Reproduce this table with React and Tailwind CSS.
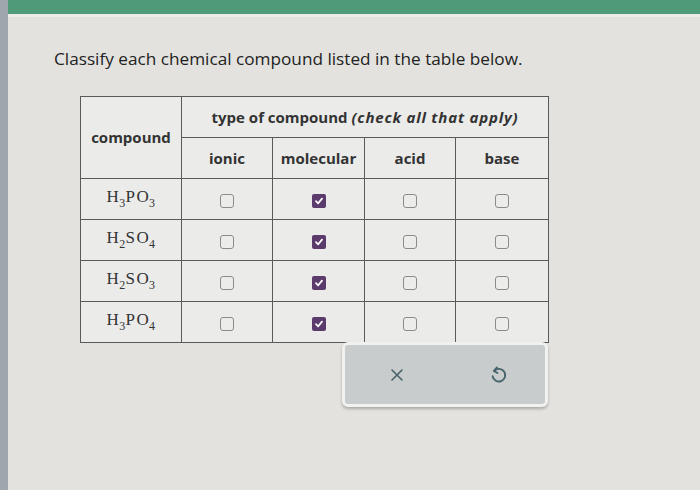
import React from "react";

const rows = [
  ["H", "3", "PO", "3"],
  ["H", "2", "SO", "4"],
  ["H", "2", "SO", "3"],
  ["H", "3", "PO", "4"],
];

function Box({ checked }) {
  if (checked) {
    return (
      <span className="inline-flex h-[14px] w-[14px] items-center justify-center rounded-[2px] bg-[#5b3a6c] align-middle">
        <svg width="10" height="10" viewBox="0 0 10 10">
          <path d="M2 5.2 L4.2 7.3 L8 2.6" fill="none" stroke="#fff" strokeWidth="1.8" strokeLinecap="round" strokeLinejoin="round" />
        </svg>
      </span>
    );
  }
  return <span className="inline-block h-[14px] w-[14px] rounded-[3px] border-[1.5px] border-[#8a8c8c] bg-[#ececeb] align-middle" />;
}

function Formula({ f }) {
  const sub = "relative top-[5px] text-[12px]";
  return (
    <span className="relative top-[-2px] font-['Liberation_Serif',serif] text-[17px] font-normal tracking-[0.4px] text-[#333]">
      {f[0]}
      <span className={sub}>{f[1]}</span>
      {f[2][0]}
      <span className="ml-[1px]">{f[2][1]}</span>
      <span className={sub}>{f[3]}</span>
    </span>
  );
}

export default function App() {
  const cell = "border-[1.5px] border-[#5a5a5a] text-center";
  return (
    <div className="flex h-[490px] w-[700px] overflow-hidden bg-[#e3e2df] font-['Open_Sans',sans-serif]">
      <div className="w-[8px] shrink-0 bg-[#9ea7ad]" />
      <div className="flex flex-1 flex-col">
        <div className="h-[14px] bg-[#4f9a78]" />
        <div className="h-[3px] bg-[#ecebe8]" />
        <div className="pl-[46px] pt-[30px]">
          <p className="text-[17.2px] leading-[24px] text-[#222]">Classify each chemical compound listed in the table below.</p>
          <table className="mt-[25px] ml-[26px] border-collapse bg-[#ebebea] text-[15px] font-bold text-[#333]">
            <colgroup>
              <col className="w-[101px]" />
              <col className="w-[91px]" />
              <col className="w-[92px]" />
              <col className="w-[91px]" />
              <col className="w-[93px]" />
            </colgroup>
            <thead>
              <tr className="h-[41px]">
                <th rowSpan={2} className={cell}>compound</th>
                <th colSpan={4} className={cell}>
                  type of compound <i className="tracking-[0.8px]">(check all that apply)</i>
                </th>
              </tr>
              <tr className="h-[41px]">
                <th className={cell}>ionic</th>
                <th className={cell}>molecular</th>
                <th className={cell}>acid</th>
                <th className={cell}>base</th>
              </tr>
            </thead>
            <tbody>
              {rows.map((r, i) => (
                <tr key={i} className="h-[41px]">
                  <td className={cell}><Formula f={r} /></td>
                  <td className={cell}><Box /></td>
                  <td className={cell}><Box checked /></td>
                  <td className={cell}><Box /></td>
                  <td className={cell}><Box /></td>
                </tr>
              ))}
            </tbody>
          </table>
          <div className="ml-[288px] mt-[-1px] w-[206px] rounded-[6px] border-[3px] border-[#f1f1ef] bg-[#c9cccc] shadow-[0_2px_3px_rgba(0,0,0,0.25)]">
            <div className="flex h-[59px] items-center justify-between pl-[44px] pr-[36px]">
              <svg width="16" height="16" viewBox="0 0 16 16">
                <path d="M3 3 L13 13 M13 3 L3 13" stroke="#46626b" strokeWidth="1.6" strokeLinecap="round" />
              </svg>
              <svg width="22" height="22" viewBox="0 0 18 18">
                <path d="M6 5.5 A5.2 5.2 0 1 1 4.6 10" fill="none" stroke="#46626b" strokeWidth="1.5" strokeLinecap="round" />
                <path d="M8.2 2.8 L5.6 5.6 L8.6 7.4" fill="none" stroke="#46626b" strokeWidth="1.5" strokeLinecap="round" strokeLinejoin="round" />
              </svg>
            </div>
          </div>
        </div>
      </div>
    </div>
  );
}
